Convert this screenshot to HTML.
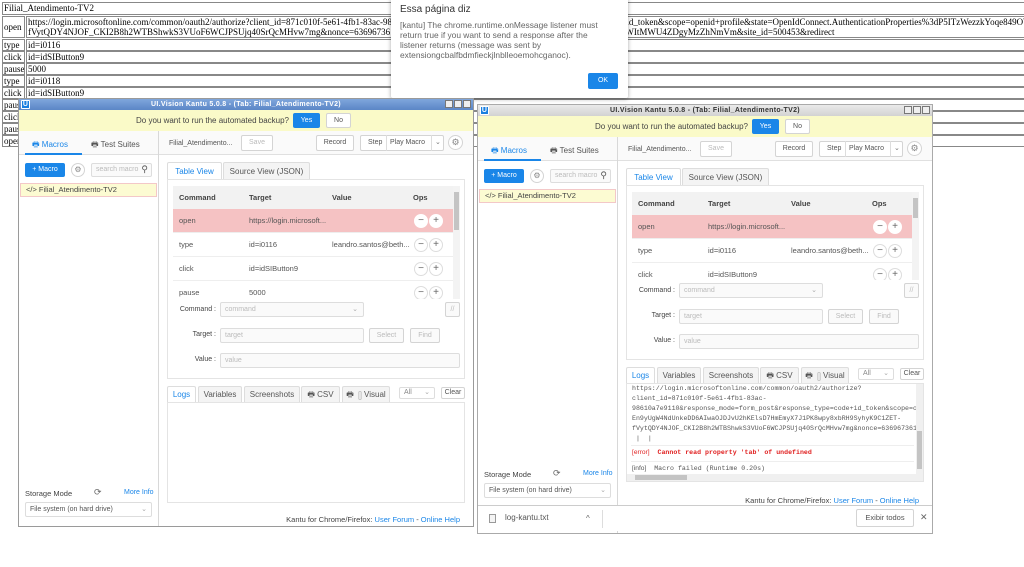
<!DOCTYPE html>
<html><head><meta charset="utf-8">
<style>
*{box-sizing:border-box;margin:0;padding:0}
body{width:1024px;height:567px;overflow:hidden;background:#fff;position:relative;font-family:"Liberation Sans",sans-serif;font-size:8px;color:#333}
.a{position:absolute}
.bg{font-family:"Liberation Serif",serif;font-size:9px;color:#000;line-height:10px}
.c1,.c2{position:absolute;border:1px solid #888;padding:0 1px;white-space:nowrap;overflow:hidden}
.c1{left:2px;width:23px}
.c2{left:26px;right:-5px}
.win{position:absolute;width:456px;background:#fff;border:1px solid #9a9a9a;overflow:hidden}
.tb{position:absolute;left:0;top:0;right:0;height:11px;font-size:7px;font-weight:bold;text-align:center;line-height:11px;letter-spacing:.3px}
.tb .u{position:absolute;left:2px;top:1px;width:9px;height:9px;background:#1a7fe0;border:1px solid #fff;border-radius:1px;color:#fff;font-size:7px;line-height:7px;text-align:center}
.tb .ctl{position:absolute;right:2px;top:1px;display:flex;gap:1px}
.tb .ctl span{width:8px;height:8px;border:1px solid #777;background:#eee}
.yl{position:absolute;left:0;right:0;top:11px;height:21px;background:#fafac8;font-size:8px;line-height:21px;color:#444}
.yl span{position:absolute;left:117px}
.btn{position:absolute;border:1px solid #d4d4d4;border-radius:2px;background:#fff;text-align:center;font-size:7px;color:#555}
.blue{background:#1a86e8;border-color:#1a86e8;color:#fff}
.hdr{position:absolute;left:0;right:0;top:32px;height:24px;border-bottom:1px solid #e0e0e0;background:#fafafa}
.lp{position:absolute;left:139px;top:32px;bottom:0;width:1px;background:#d8d8d8}
.inp{position:absolute;border:1px solid #ddd;border-radius:2px;background:#fafafa;color:#bbb;font-size:7px;padding-left:4px}
.tab{position:absolute;border:1px solid #ddd;border-bottom:none;background:#f4f4f4;text-align:center;font-size:8px;color:#555;border-radius:2px 2px 0 0}
.tab.on{background:#fff;color:#1a86e8}
.row{position:absolute;left:154px;width:280px;height:24px;border-bottom:1px solid #eee;font-size:7.5px;color:#555;line-height:24px}
.row span{position:absolute}
.op{position:absolute;width:14px;height:14px;border:1px solid #ddd;border-radius:50%;background:#fff;text-align:center;line-height:12px;font-size:10px;color:#666;top:5px}
.lbl{position:absolute;font-size:7px;color:#444;text-align:right;width:60px}
.link{color:#1a86e8}
.mono{font-family:"Liberation Mono",monospace;font-size:6.6px;color:#555;white-space:nowrap;line-height:10px}
</style></head><body>

<div class="bg">
<div class="c1 a" style="top:2px;height:13px;width:auto;right:-5px;line-height:11px">Filial_Atendimento-TV2</div>
<div class="c1" style="top:16px;height:22px;line-height:20px">open</div>
<div class="c2" style="top:16px;height:22px;line-height:10px">https://login.microsoftonline.com/common/oauth2/authorize?client_id=871c010f-5e61-4fb1-83ac-98610a7e9110&amp;response_mode=form_post&amp;response_type=code+id_token&amp;scope=openid+profile&amp;state=OpenIdConnect.AuthenticationProperties%3dP5ITzWezzkYoqe849OWBRIP9c-En9yUgW4NdUnkeDD6AIwaOJDJvU2hKElsD7HmEmyX7J1PK8wpy8xbRH9SyhyK9C1ZET-<br>fVytQDY4NJOF_CKI2B8h2WTBShwkS3VUoF6WCJPSUjq40SrQcMHvw7mg&amp;nonce=636967361039292OThlZmU4MGQyNTVmOGYtZWIzMS00Yjg4LWFlNWItMWU4ZDgyMzZhNmVm&amp;site_id=500453&amp;redirect</div>
<div class="c1" style="top:39px;height:12px">type</div><div class="c2" style="top:39px;height:12px">id=i0116</div>
<div class="c1" style="top:51px;height:12px">click</div><div class="c2" style="top:51px;height:12px">id=idSIButton9</div>
<div class="c1" style="top:63px;height:12px">pause</div><div class="c2" style="top:63px;height:12px">5000</div>
<div class="c1" style="top:75px;height:12px">type</div><div class="c2" style="top:75px;height:12px">id=i0118</div>
<div class="c1" style="top:87px;height:12px">click</div><div class="c2" style="top:87px;height:12px">id=idSIButton9</div>
<div class="c1" style="top:99px;height:12px">pause</div><div class="c2" style="top:99px;height:12px"></div>
<div class="c1" style="top:111px;height:12px">click</div><div class="c2" style="top:111px;height:12px"></div>
<div class="c1" style="top:123px;height:12px">pause</div><div class="c2" style="top:123px;height:12px"></div>
<div class="c1" style="top:135px;height:12px">open</div><div class="c2" style="top:135px;height:12px"></div>
</div>

<div class="a" style="left:391px;top:-2px;width:237px;height:100px;background:#fff;box-shadow:0 1px 4px rgba(0,0,0,.35);border-radius:0 0 2px 2px">
<div class="a" style="left:9px;top:6px;font-size:10px;color:#333">Essa página diz</div>
<div class="a" style="left:9px;top:22px;width:205px;font-size:8.4px;line-height:10px;color:#666">[kantu] The chrome.runtime.onMessage listener must return true if you want to send a response after the listener returns (message was sent by extensiongcbalfbdmfieckjlnblleoemohcganoc).</div>
<div class="a" style="left:197px;top:75px;width:30px;height:16px;border-radius:2px;color:#fff;font-size:7px;text-align:center;line-height:16px;background:#1a86e8">OK</div>
</div>

<div class="win" style="left:18px;top:98px;height:429px;--s:0px">
 <div class="tb" style="background:linear-gradient(#7fa6dc,#5b86c6);color:#fff">UI.Vision Kantu 5.0.8 - (Tab: Filial_Atendimento-TV2)<div class="u">U</div><div class="ctl"><span></span><span></span><span></span></div></div>
 <div class="yl"><span>Do you want to run the automated backup?</span></div>
 <div class="btn blue" style="left:274px;top:14px;width:27px;height:15px;line-height:13px">Yes</div>
 <div class="btn" style="left:307px;top:14px;width:25px;height:15px;line-height:13px">No</div>
 <div class="hdr"></div>
 <div class="a" style="left:13px;top:40px;font-size:8px;color:#1a86e8">🖶 Macros</div>
 <div class="a" style="left:6px;top:54px;width:57px;height:2px;background:#1a86e8"></div>
 <div class="a" style="left:72px;top:40px;font-size:8px;color:#555">🖶 Test Suites</div>
 <div class="lp"></div>
 <div class="a" style="left:150px;top:41px;font-size:7px;color:#555">Filial_Atendimento...</div>
 <div class="btn" style="left:222px;top:36px;width:32px;height:16px;line-height:14px;color:#bbb">Save</div>
 <div class="btn" style="left:297px;top:36px;width:38px;height:16px;line-height:14px">Record</div>
 <div class="btn" style="left:341px;top:36px;width:84px;height:16px;line-height:14px"></div>
 <div class="a" style="left:349px;top:40px;font-size:7px;color:#555">Step</div>
 <div class="a" style="left:367px;top:36px;width:1px;height:16px;background:#ddd"></div>
 <div class="a" style="left:371px;top:40px;font-size:7px;color:#555">Play Macro</div>
 <div class="a" style="left:412px;top:36px;width:1px;height:16px;background:#ddd"></div>
 <div class="a" style="left:416px;top:39px;font-size:7px;color:#777">⌄</div>
 <div class="btn" style="left:429px;top:36px;width:15px;height:15px;border-radius:50%;line-height:13px;font-size:9px;color:#888">⚙</div>
 <div class="btn blue" style="left:6px;top:64px;width:40px;height:14px;line-height:12px">+ Macro</div>
 <div class="btn" style="left:52px;top:64px;width:14px;height:14px;border-radius:50%;line-height:12px;font-size:8px;color:#888">⚙</div>
 <div class="inp" style="left:72px;top:64px;width:61px;height:14px;line-height:12px">search macro<span style="position:absolute;right:3px;top:-1px;color:#555;font-size:9px">⚲</span></div>
 <div class="a" style="left:1px;top:84px;width:137px;height:14px;background:#fcfbd2;border:1px solid #f3c8c8;font-size:7.5px;line-height:12px;padding-left:5px;color:#444">&lt;/&gt; Filial_Atendimento-TV2</div>
 <div class="a" style="left:6px;top:calc(390px - var(--s));font-size:7.5px;color:#444">Storage Mode</div>
 <div class="a" style="left:75px;top:calc(388px - var(--s));font-size:9px;color:#666">⟳</div>
 <div class="a link" style="left:105px;top:calc(390px - var(--s));font-size:7px">More Info</div>
 <div class="inp" style="left:6px;top:calc(403px - var(--s));width:127px;height:15px;line-height:13px;color:#555;background:#fff">File system (on hard drive)<span style="position:absolute;right:4px;color:#aaa">⌄</span></div>
 <div class="tab on" style="left:148px;top:63px;width:55px;height:18px;line-height:17px">Table View</div>
 <div class="tab" style="left:204px;top:63px;width:87px;height:17px;line-height:17px">Source View (JSON)</div>
 <div class="a" style="left:148px;top:80px;width:298px;height:calc(200px - var(--s));border:1px solid #e4e4e4"></div>
 <div class="a" style="left:154px;top:87px;width:280px;height:calc(113px - var(--s));overflow:hidden">
  <div class="row" style="left:0;top:0;background:#f2f2f2;font-weight:bold;color:#444"><span style="left:6px">Command</span><span style="left:76px">Target</span><span style="left:159px">Value</span><span style="left:240px">Ops</span></div>
  <div class="row" style="left:0;top:23px;background:#f5c2c3"><span style="left:6px">open</span><span style="left:76px">https://login.microsoft...</span><div class="op" style="left:241px;border-color:#fff">−</div><div class="op" style="left:256px;border-color:#fff">+</div></div>
  <div class="row" style="left:0;top:47px"><span style="left:6px">type</span><span style="left:76px">id=i0116</span><span style="left:159px">leandro.santos@beth...</span><div class="op" style="left:241px">−</div><div class="op" style="left:256px">+</div></div>
  <div class="row" style="left:0;top:71px"><span style="left:6px">click</span><span style="left:76px">id=idSIButton9</span><div class="op" style="left:241px">−</div><div class="op" style="left:256px">+</div></div>
  <div class="row" style="left:0;top:95px"><span style="left:6px">pause</span><span style="left:76px">5000</span><div class="op" style="left:241px">−</div><div class="op" style="left:256px">+</div></div>
 </div>
 <div class="a" style="left:434px;top:87px;width:7px;height:calc(113px - var(--s));background:#f3f3f3"><div style="margin:6px 1px 0;height:38px;background:#c4c4c4"></div></div>
 <div class="lbl" style="left:137px;top:calc(207px - var(--s))">Command :</div>
 <div class="inp" style="left:201px;top:calc(203px - var(--s));width:144px;height:15px;line-height:13px">command<span style="position:absolute;right:5px;color:#aaa">⌄</span></div>
 <div class="btn" style="left:426px;top:calc(203px - var(--s));width:15px;height:15px;line-height:13px;color:#bbb;background:#fafafa">//</div>
 <div class="lbl" style="left:137px;top:calc(232px - var(--s))">Target :</div>
 <div class="inp" style="left:201px;top:calc(229px - var(--s));width:144px;height:15px;line-height:13px">target</div>
 <div class="btn" style="left:350px;top:calc(229px - var(--s));width:35px;height:15px;line-height:13px;color:#bbb;background:#fafafa">Select</div>
 <div class="btn" style="left:391px;top:calc(229px - var(--s));width:30px;height:15px;line-height:13px;color:#bbb;background:#fafafa">Find</div>
 <div class="lbl" style="left:137px;top:calc(257px - var(--s))">Value :</div>
 <div class="inp" style="left:201px;top:calc(254px - var(--s));width:240px;height:15px;line-height:13px">value</div>
 <div class="tab on" style="left:148px;top:calc(287px - var(--s));width:29px;height:17px;line-height:16px">Logs</div>
 <div class="tab" style="left:179px;top:calc(287px - var(--s));width:44px;height:16px;line-height:16px">Variables</div>
 <div class="tab" style="left:225px;top:calc(287px - var(--s));width:56px;height:16px;line-height:16px">Screenshots</div>
 <div class="tab" style="left:282px;top:calc(287px - var(--s));width:39px;height:16px;line-height:16px">🖶 CSV</div>
 <div class="tab" style="left:323px;top:calc(287px - var(--s));width:48px;height:16px;line-height:16px">🖶 ▯Visual</div>
 <div class="inp" style="left:380px;top:calc(288px - var(--s));width:36px;height:12px;line-height:10px;color:#888;background:#fff">All<span style="position:absolute;right:4px;color:#aaa">⌄</span></div>
 <div class="btn" style="left:422px;top:calc(288px - var(--s));width:24px;height:12px;line-height:10px">Clear</div>
 <div class="a" style="left:148px;top:calc(303px - var(--s));width:298px;height:101px;border:1px solid #e4e4e4;overflow:hidden"></div>
 <div class="a" style="right:13px;top:calc(416px - var(--s));font-size:7.5px;color:#444">Kantu for Chrome/Firefox: <span class="link">User Forum</span> - <span class="link">Online Help</span></div>
</div>

<div class="win" style="left:477px;top:104px;height:430px;--s:25px;border-color:#aaa">
 <div class="tb" style="background:linear-gradient(#eaeaea,#d2d2d2);color:#333">UI.Vision Kantu 5.0.8 - (Tab: Filial_Atendimento-TV2)<div class="u">U</div><div class="ctl"><span></span><span></span><span></span></div></div>
 <div class="yl"><span>Do you want to run the automated backup?</span></div>
 <div class="btn blue" style="left:274px;top:14px;width:27px;height:15px;line-height:13px">Yes</div>
 <div class="btn" style="left:307px;top:14px;width:25px;height:15px;line-height:13px">No</div>
 <div class="hdr"></div>
 <div class="a" style="left:13px;top:40px;font-size:8px;color:#1a86e8">🖶 Macros</div>
 <div class="a" style="left:6px;top:54px;width:57px;height:2px;background:#1a86e8"></div>
 <div class="a" style="left:72px;top:40px;font-size:8px;color:#555">🖶 Test Suites</div>
 <div class="lp"></div>
 <div class="a" style="left:150px;top:41px;font-size:7px;color:#555">Filial_Atendimento...</div>
 <div class="btn" style="left:222px;top:36px;width:32px;height:16px;line-height:14px;color:#bbb">Save</div>
 <div class="btn" style="left:297px;top:36px;width:38px;height:16px;line-height:14px">Record</div>
 <div class="btn" style="left:341px;top:36px;width:84px;height:16px;line-height:14px"></div>
 <div class="a" style="left:349px;top:40px;font-size:7px;color:#555">Step</div>
 <div class="a" style="left:367px;top:36px;width:1px;height:16px;background:#ddd"></div>
 <div class="a" style="left:371px;top:40px;font-size:7px;color:#555">Play Macro</div>
 <div class="a" style="left:412px;top:36px;width:1px;height:16px;background:#ddd"></div>
 <div class="a" style="left:416px;top:39px;font-size:7px;color:#777">⌄</div>
 <div class="btn" style="left:429px;top:36px;width:15px;height:15px;border-radius:50%;line-height:13px;font-size:9px;color:#888">⚙</div>
 <div class="btn blue" style="left:6px;top:64px;width:40px;height:14px;line-height:12px">+ Macro</div>
 <div class="btn" style="left:52px;top:64px;width:14px;height:14px;border-radius:50%;line-height:12px;font-size:8px;color:#888">⚙</div>
 <div class="inp" style="left:72px;top:64px;width:61px;height:14px;line-height:12px">search macro<span style="position:absolute;right:3px;top:-1px;color:#555;font-size:9px">⚲</span></div>
 <div class="a" style="left:1px;top:84px;width:137px;height:14px;background:#fcfbd2;border:1px solid #f3c8c8;font-size:7.5px;line-height:12px;padding-left:5px;color:#444">&lt;/&gt; Filial_Atendimento-TV2</div>
 <div class="a" style="left:6px;top:calc(390px - var(--s));font-size:7.5px;color:#444">Storage Mode</div>
 <div class="a" style="left:75px;top:calc(388px - var(--s));font-size:9px;color:#666">⟳</div>
 <div class="a link" style="left:105px;top:calc(390px - var(--s));font-size:7px">More Info</div>
 <div class="inp" style="left:6px;top:calc(403px - var(--s));width:127px;height:15px;line-height:13px;color:#555;background:#fff">File system (on hard drive)<span style="position:absolute;right:4px;color:#aaa">⌄</span></div>
 <div class="tab on" style="left:148px;top:63px;width:55px;height:18px;line-height:17px">Table View</div>
 <div class="tab" style="left:204px;top:63px;width:87px;height:17px;line-height:17px">Source View (JSON)</div>
 <div class="a" style="left:148px;top:80px;width:298px;height:calc(200px - var(--s));border:1px solid #e4e4e4"></div>
 <div class="a" style="left:154px;top:87px;width:280px;height:calc(113px - var(--s));overflow:hidden">
  <div class="row" style="left:0;top:0;background:#f2f2f2;font-weight:bold;color:#444"><span style="left:6px">Command</span><span style="left:76px">Target</span><span style="left:159px">Value</span><span style="left:240px">Ops</span></div>
  <div class="row" style="left:0;top:23px;background:#f5c2c3"><span style="left:6px">open</span><span style="left:76px">https://login.microsoft...</span><div class="op" style="left:241px;border-color:#fff">−</div><div class="op" style="left:256px;border-color:#fff">+</div></div>
  <div class="row" style="left:0;top:47px"><span style="left:6px">type</span><span style="left:76px">id=i0116</span><span style="left:159px">leandro.santos@beth...</span><div class="op" style="left:241px">−</div><div class="op" style="left:256px">+</div></div>
  <div class="row" style="left:0;top:71px"><span style="left:6px">click</span><span style="left:76px">id=idSIButton9</span><div class="op" style="left:241px">−</div><div class="op" style="left:256px">+</div></div>
 </div>
 <div class="a" style="left:434px;top:87px;width:7px;height:calc(113px - var(--s));background:#f3f3f3"><div style="margin:6px 1px 0;height:20px;background:#c4c4c4"></div></div>
 <div class="lbl" style="left:137px;top:calc(207px - var(--s))">Command :</div>
 <div class="inp" style="left:201px;top:calc(203px - var(--s));width:144px;height:15px;line-height:13px">command<span style="position:absolute;right:5px;color:#aaa">⌄</span></div>
 <div class="btn" style="left:426px;top:calc(203px - var(--s));width:15px;height:15px;line-height:13px;color:#bbb;background:#fafafa">//</div>
 <div class="lbl" style="left:137px;top:calc(232px - var(--s))">Target :</div>
 <div class="inp" style="left:201px;top:calc(229px - var(--s));width:144px;height:15px;line-height:13px">target</div>
 <div class="btn" style="left:350px;top:calc(229px - var(--s));width:35px;height:15px;line-height:13px;color:#bbb;background:#fafafa">Select</div>
 <div class="btn" style="left:391px;top:calc(229px - var(--s));width:30px;height:15px;line-height:13px;color:#bbb;background:#fafafa">Find</div>
 <div class="lbl" style="left:137px;top:calc(257px - var(--s))">Value :</div>
 <div class="inp" style="left:201px;top:calc(254px - var(--s));width:240px;height:15px;line-height:13px">value</div>
 <div class="tab on" style="left:148px;top:calc(287px - var(--s));width:29px;height:17px;line-height:16px">Logs</div>
 <div class="tab" style="left:179px;top:calc(287px - var(--s));width:44px;height:16px;line-height:16px">Variables</div>
 <div class="tab" style="left:225px;top:calc(287px - var(--s));width:56px;height:16px;line-height:16px">Screenshots</div>
 <div class="tab" style="left:282px;top:calc(287px - var(--s));width:39px;height:16px;line-height:16px">🖶 CSV</div>
 <div class="tab" style="left:323px;top:calc(287px - var(--s));width:48px;height:16px;line-height:16px">🖶 ▯Visual</div>
 <div class="inp" style="left:380px;top:calc(288px - var(--s));width:36px;height:12px;line-height:10px;color:#888;background:#fff">All<span style="position:absolute;right:4px;color:#aaa">⌄</span></div>
 <div class="btn" style="left:422px;top:calc(288px - var(--s));width:24px;height:12px;line-height:10px">Clear</div>
 <div class="a" style="left:148px;top:278px;width:298px;height:99px;border:1px solid #e4e4e4;overflow:hidden">
  <div class="a mono" style="left:5px;top:0">https://login.microsoftonline.com/common/oauth2/authorize?<br>client_id=871c010f-5e61-4fb1-83ac-<br>98610a7e9110&amp;response_mode=form_post&amp;response_type=code+id_token&amp;scope=openid<br>En9yUgW4NdUnkeDD6AIwaOJDJvU2hKElsD7HmEmyX7J1PK8wpy8xbRH9SyhyK9C1ZET-<br>fVytQDY4NJOF_CKI2B8h2WTBShwkS3VUoF6WCJPSUjq40SrQcMHvw7mg&amp;nonce=63696736103922<br>&nbsp;|&nbsp;&nbsp;|</div>
  <div class="a" style="left:4px;top:61px;width:283px;height:1px;background:#eee"></div>
  <div class="a mono" style="left:5px;top:64px;color:#e02020;font-weight:bold"><span style="font-family:'Liberation Sans';font-weight:normal">[error]</span>&nbsp; Cannot read property 'tab' of undefined</div>
  <div class="a" style="left:4px;top:77px;width:283px;height:1px;background:#eee"></div>
  <div class="a mono" style="left:5px;top:80px"><span style="font-family:'Liberation Sans'">[info]</span>&nbsp; Macro failed (Runtime 0.20s)</div>
  <div class="a" style="right:0;top:0;width:7px;height:91px;background:#f0f0f0"><div style="margin:47px 1px 0;height:38px;background:#c4c4c4"></div></div>
  <div class="a" style="left:0;bottom:0;width:297px;height:7px;background:#f0f0f0"><div style="margin:1px 0 0 8px;width:52px;height:5px;background:#c4c4c4"></div></div>
 </div>
 <div class="a" style="right:13px;top:calc(416px - var(--s));font-size:7.5px;color:#444">Kantu for Chrome/Firefox: <span class="link">User Forum</span> - <span class="link">Online Help</span></div>
 <div class="a" style="left:0;top:400px;width:456px;height:26px;background:#fff;border-top:1px solid #ccc">
  <div class="a" style="left:11px;top:8px;width:7px;height:9px;border:1px solid #999;background:#f4f4f4"></div>
  <div class="a" style="left:27px;top:7px;font-size:8px;color:#555">log-kantu.txt</div>
  <div class="a" style="left:108px;top:8px;font-size:8px;color:#666">^</div>
  <div class="a" style="left:124px;top:4px;width:1px;height:18px;background:#ddd"></div>
  <div class="btn" style="left:378px;top:3px;width:58px;height:18px;line-height:16px;font-size:7.5px;color:#555">Exibir todos</div>
  <div class="a" style="left:442px;top:6px;font-size:9px;color:#666">✕</div>
 </div>
</div>

<div class="a" style="left:934px;top:98px;width:90px;height:1px;background:#888"></div>
<div class="a" style="left:934px;top:122px;width:90px;height:1px;background:#888"></div>
<div class="a" style="left:934px;top:134px;width:90px;height:1px;background:#888"></div>
<div class="a" style="left:934px;top:146px;width:90px;height:1px;background:#888"></div>
</body></html>
